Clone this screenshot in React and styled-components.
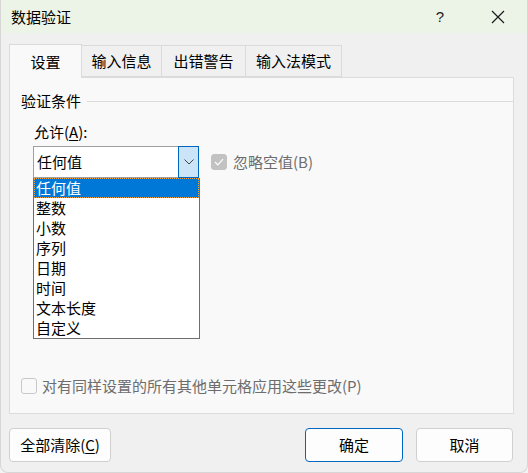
import React from 'react';
import styled, { createGlobalStyle } from 'styled-components';

const GlobalStyle = createGlobalStyle`
  html, body {
    margin: 0;
    padding: 0;
    background: #f3f3f3;
  }
  body {
    font-family: "Noto Sans CJK SC", "Noto Sans", sans-serif;
    font-size: 15px;
    color: #000;
  }
`;

const Dialog = styled.div`
  width: 528px;
  height: 473px;
  box-sizing: border-box;
  display: flex;
  flex-direction: column;
  background: #f0f0f0;
  border-radius: 0 0 8px 8px;
  border: 1px solid #d6d6d6;
  border-top: none;
  overflow: hidden;
`;

const TitleBar = styled.div`
  height: 33px;
  flex: none;
  display: flex;
  align-items: center;
  padding: 0 0 0 10px;
  background: #ecf4e8;
`;

const Title = styled.div`
  flex: 1;
  font-size: 15px;
  line-height: 20px;
`;

const TitleButton = styled.div`
  width: 58px;
  height: 33px;
  display: flex;
  align-items: center;
  justify-content: center;
  font-family: "Liberation Sans", sans-serif;
  font-size: 15px;
  color: #222;
`;

const Body = styled.div`
  flex: 1;
  display: flex;
  flex-direction: column;
  padding: 11px 14px 0 8px;
`;

const TabRow = styled.div`
  display: flex;
  align-items: flex-end;
  height: 33px;
  position: relative;
  z-index: 1;
`;

const Tab = styled.div`
  box-sizing: border-box;
  width: ${(p) => p.$w}px;
  height: ${(p) => (p.$active ? 34 : 32)}px;
  margin-bottom: ${(p) => (p.$active ? -1 : 0)}px;
  display: flex;
  align-items: center;
  justify-content: center;
  background: ${(p) => (p.$active ? '#f9f9f9' : '#f0f0f0')};
  border: 1px solid #dadada;
  border-bottom: ${(p) => (p.$active ? 'none' : '1px solid #dadada')};
  border-left: ${(p) => (p.$first || p.$active ? '1px solid #dadada' : 'none')};
  line-height: 20px;
`;

const Panel = styled.div`
  box-sizing: border-box;
  height: 337px;
  margin-right: -1px;
  background: #f9f9f9;
  border: 1px solid #dcdcdc;
  display: flex;
  flex-direction: column;
  padding: 13px 0 0 11px;
`;

const GroupHeader = styled.div`
  display: flex;
  align-items: center;
  height: 20px;
  line-height: 20px;
  &::after {
    content: '';
    flex: 1;
    height: 1px;
    margin-left: 6px;
    background: #dcdcdc;
  }
`;

const Label = styled.div`
  margin: 11px 0 0 13px;
  height: 20px;
  line-height: 20px;
`;

const ComboRow = styled.div`
  display: flex;
  align-items: center;
  margin: 4px 0 0 12px;
  gap: 12px;
`;

const Combo = styled.div`
  position: relative;
  box-sizing: border-box;
  width: 166px;
  height: 32px;
  display: flex;
  align-items: center;
  background: #fff;
  border: 1px solid #a0a0a0;
`;

const ComboText = styled.div`
  flex: 1;
  padding-left: 3px;
  line-height: 20px;
`;

const ComboButton = styled.div`
  box-sizing: border-box;
  width: 21px;
  height: 32px;
  margin: -1px -1px -1px 0;
  display: flex;
  align-items: center;
  justify-content: center;
  background: #cce4f7;
  border: 1px solid #0067c0;
`;

const List = styled.div`
  position: absolute;
  top: 31px;
  left: -1px;
  box-sizing: border-box;
  width: 167px;
  background: #fff;
  border: 1px solid #6e6e6e;
  border-top: none;
  z-index: 2;
`;

const Item = styled.div`
  box-sizing: border-box;
  height: 20px;
  line-height: 20px;
  padding-left: 2px;
  background: ${(p) => (p.$selected ? '#0078d7' : 'transparent')};
  color: ${(p) => (p.$selected ? '#fff' : '#000')};
  outline: ${(p) => (p.$selected ? '1px dotted #f3a53c' : 'none')};
  outline-offset: -1px;
`;

const Check = styled.div`
  display: flex;
  align-items: center;
  gap: 6px;
  color: #6d6d6d;
  line-height: 20px;
`;

const Box = styled.div`
  box-sizing: border-box;
  width: 16px;
  height: 16px;
  border-radius: 3px;
  display: flex;
  align-items: center;
  justify-content: center;
  background: ${(p) => (p.$checked ? '#c2c2c2' : '#f9f9f9')};
  border: 1px solid ${(p) => (p.$checked ? '#c2c2c2' : '#c8c8c8')};
`;

const BottomCheck = styled(Check)`
  margin-top: auto;
  margin-bottom: 17px;
  gap: 5px;
`;

const Footer = styled.div`
  display: flex;
  align-items: center;
  margin-top: 14px;
  gap: 13px;
`;

const Button = styled.div`
  box-sizing: border-box;
  width: ${(p) => p.$w}px;
  height: 34px;
  display: flex;
  align-items: center;
  justify-content: center;
  background: #fdfdfd;
  border: 1px solid ${(p) => (p.$primary ? '#0067c0' : '#d0d0d0')};
  border-radius: 4px;
  line-height: 20px;
`;

const Spacer = styled.div`
  flex: 1;
`;

const U = styled.span`
  text-decoration: underline;
  text-underline-offset: 2px;
`;

const items = ['任何值', '整数', '小数', '序列', '日期', '时间', '文本长度', '自定义'];

export default function App() {
  return (
    <>
      <GlobalStyle />
      <Dialog>
        <TitleBar>
          <Title>数据验证</Title>
          <TitleButton>?</TitleButton>
          <TitleButton>
            <svg width="14" height="14" viewBox="0 0 14 14">
              <path d="M1 1L13 13M13 1L1 13" stroke="#1a1a1a" strokeWidth="1.2" />
            </svg>
          </TitleButton>
        </TitleBar>
        <Body>
          <TabRow>
            <Tab $w={73} $active $first>设置</Tab>
            <Tab $w={80}>输入信息</Tab>
            <Tab $w={84}>出错警告</Tab>
            <Tab $w={96}>输入法模式</Tab>
          </TabRow>
          <Panel>
            <GroupHeader>验证条件</GroupHeader>
            <Label>
              允许(<U>A</U>):
            </Label>
            <ComboRow>
              <Combo>
                <ComboText>任何值</ComboText>
                <ComboButton>
                  <svg width="10" height="6" viewBox="0 0 10 6">
                    <path d="M0.5 0.5L5 5L9.5 0.5" stroke="#444" strokeWidth="1" fill="none" />
                  </svg>
                </ComboButton>
                <List>
                  {items.map((t, i) => (
                    <Item key={t} $selected={i === 0}>
                      {t}
                    </Item>
                  ))}
                </List>
              </Combo>
              <Check>
                <Box $checked>
                  <svg width="10" height="8" viewBox="0 0 10 8">
                    <path d="M1 4L3.8 6.8L9 1.2" stroke="#fff" strokeWidth="1.2" fill="none" />
                  </svg>
                </Box>
                忽略空值(B)
              </Check>
            </ComboRow>
            <BottomCheck>
              <Box />
              对有同样设置的所有其他单元格应用这些更改(P)
            </BottomCheck>
          </Panel>
          <Footer>
            <Button $w={102}>
              全部清除(<U>C</U>)
            </Button>
            <Spacer />
            <Button $w={98} $primary>确定</Button>
            <Button $w={97}>取消</Button>
          </Footer>
        </Body>
      </Dialog>
    </>
  );
}
